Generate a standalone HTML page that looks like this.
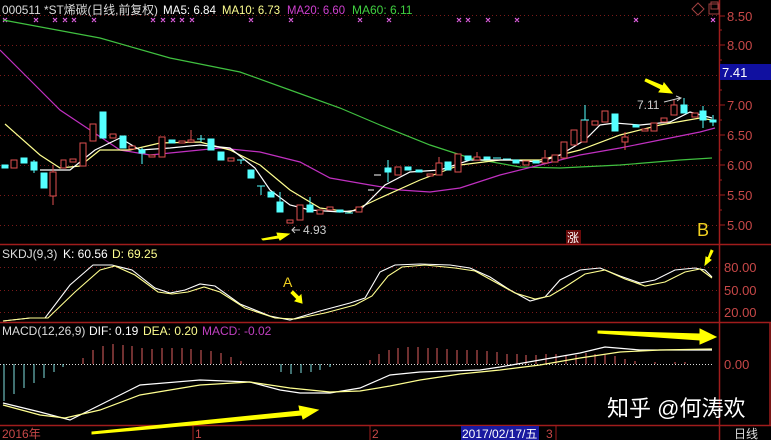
<!DOCTYPE html>
<html><head><meta charset="utf-8"><style>
html,body{margin:0;padding:0;background:#000;}
body{width:771px;height:440px;overflow:hidden;position:relative;font-family:"Liberation Sans","Noto Sans CJK SC",sans-serif;}
svg{position:absolute;left:0;top:0;}
text{font-family:"Liberation Sans","Noto Sans CJK SC",sans-serif;}
</style></head><body>
<svg width="771" height="440" viewBox="0 0 771 440">
<g stroke="#7a1a1a" stroke-dasharray="1,3" stroke-width="1">
<line x1="0" y1="15.5" x2="718" y2="15.5"/><line x1="0" y1="45.5" x2="718" y2="45.5"/>
<line x1="0" y1="75.5" x2="718" y2="75.5"/><line x1="0" y1="105.5" x2="718" y2="105.5"/>
<line x1="0" y1="135.5" x2="718" y2="135.5"/><line x1="0" y1="165.5" x2="718" y2="165.5"/>
<line x1="0" y1="195.5" x2="718" y2="195.5"/><line x1="0" y1="225.5" x2="718" y2="225.5"/>
<line x1="0" y1="267.5" x2="718" y2="267.5"/><line x1="0" y1="290.5" x2="718" y2="290.5"/>
<line x1="0" y1="312.5" x2="718" y2="312.5"/>
</g>
<line x1="0" y1="364.5" x2="712" y2="364.5" stroke="#ddd" stroke-dasharray="1,2"/>
<g stroke="#a01c1c" stroke-width="1.5" fill="none">
<line x1="0" y1="244.5" x2="771" y2="244.5"/>
<line x1="0" y1="322.5" x2="771" y2="322.5"/>
<line x1="0" y1="425.5" x2="771" y2="425.5"/>
<line x1="719.5" y1="0" x2="719.5" y2="440"/>
<line x1="770" y1="322" x2="770" y2="425"/>
</g>
<g stroke="#a01c1c">
<line x1="719" y1="16" x2="725" y2="16"/><line x1="719" y1="30" x2="722" y2="30"/><line x1="719" y1="45" x2="725" y2="45"/><line x1="719" y1="60" x2="722" y2="60"/><line x1="719" y1="90" x2="722" y2="90"/><line x1="719" y1="105" x2="725" y2="105"/><line x1="719" y1="120" x2="722" y2="120"/><line x1="719" y1="135" x2="725" y2="135"/><line x1="719" y1="150" x2="722" y2="150"/><line x1="719" y1="165" x2="725" y2="165"/><line x1="719" y1="180" x2="722" y2="180"/><line x1="719" y1="195" x2="725" y2="195"/><line x1="719" y1="210" x2="722" y2="210"/><line x1="719" y1="225" x2="725" y2="225"/>
<line x1="193" y1="425" x2="193" y2="440"/><line x1="370" y1="425" x2="370" y2="440"/><line x1="556" y1="425" x2="556" y2="440"/>
</g>
<g fill="#c84848" font-size="13">
<text x="727" y="21">8.50</text><text x="727" y="50">8.00</text><text x="727" y="110">7.00</text><text x="727" y="140">6.50</text><text x="727" y="170">6.00</text><text x="727" y="200">5.50</text><text x="727" y="230">5.00</text>
<text x="724" y="272">80.00</text><text x="724" y="295">50.00</text><text x="724" y="317">20.00</text>
<text x="724" y="369">0.00</text>
</g>
<rect x="720" y="64" width="51" height="16" fill="#1010a0"/>
<text x="722" y="77" fill="#fff" font-size="13">7.41</text>
<text x="2" y="14" font-size="12" fill="#ddd" textLength="156" lengthAdjust="spacingAndGlyphs">000511 *ST烯碳(日线,前复权)</text>
<text x="163" y="14" font-size="12" fill="#fff" textLength="53" lengthAdjust="spacingAndGlyphs">MA5: 6.84</text>
<text x="222" y="14" font-size="12" fill="#ffff90" textLength="58" lengthAdjust="spacingAndGlyphs">MA10: 6.73</text>
<text x="287" y="14" font-size="12" fill="#d040d0" textLength="58" lengthAdjust="spacingAndGlyphs">MA20: 6.60</text>
<text x="352" y="14" font-size="12" fill="#40d040">MA60: 6.11</text>
<g fill="#c040c0" stroke="#e060e0" stroke-width="1.2">
<path d="M3 18l4 4m0-4l-4 4M34 18l4 4m0-4l-4 4M53 18l4 4m0-4l-4 4M63 18l4 4m0-4l-4 4M72 18l4 4m0-4l-4 4M92 18l4 4m0-4l-4 4M151 18l4 4m0-4l-4 4M161 18l4 4m0-4l-4 4M171 18l4 4m0-4l-4 4M180 18l4 4m0-4l-4 4M190 18l4 4m0-4l-4 4M249 18l4 4m0-4l-4 4M289 18l4 4m0-4l-4 4M358 18l4 4m0-4l-4 4M387 18l4 4m0-4l-4 4M457 18l4 4m0-4l-4 4M466 18l4 4m0-4l-4 4M486 18l4 4m0-4l-4 4M515 18l4 4m0-4l-4 4M634 18l4 4m0-4l-4 4M711 18l4 4m0-4l-4 4"/>
</g>
<path d="M698 3 L704 9 L698 15 L692 9 Z" fill="none" stroke="#a04040"/>
<rect x="709" y="4" width="10" height="10" fill="none" stroke="#a04040"/><rect x="711" y="2" width="7" height="7" fill="none" stroke="#a04040"/>
<g fill="none" stroke-width="1.2">
<polyline stroke="#40c040" points="3,20 100,38 170,58 240,72 290,90 340,108 380,125 430,145 470,158 520,167 560,168 620,165 680,160 712,158"/>
<polyline stroke="#c030c0" points="0,50 30,80 60,110 90,130 120,150 150,155 180,152 220,148 260,152 300,162 330,178 370,185 400,190 430,192 460,188 500,175 540,165 580,155 620,148 660,140 700,132 715,128"/>
<polyline stroke="#ffff90" points="5,124 40,155 60,168 80,166 100,150 130,150 160,143 200,142 230,150 260,165 290,190 320,208 350,212 380,198 420,180 460,165 500,160 540,160 580,150 620,135 660,125 700,118 712,120"/>
<polyline stroke="#fff" points="40,170 70,170 95,150 120,138 140,150 170,148 200,145 230,148 255,168 270,190 290,205 310,210 340,212 360,210 385,185 410,172 440,170 470,160 510,160 540,162 560,155 585,140 600,125 615,123 640,125 670,122 690,112 712,118"/>
</g>
<g stroke="#e05050" fill="#000">
<rect x="11" y="160" width="6" height="8"/><rect x="61" y="160" width="5" height="8"/><rect x="70" y="159" width="6" height="3"/>
<line x1="53" y1="165" x2="53" y2="205"/><rect x="50" y="172" width="6" height="24"/>
<rect x="80" y="143" width="6" height="23"/><rect x="90" y="124" width="6" height="17"/><rect x="110" y="134" width="6" height="4"/>
<rect x="129" y="146" width="6" height="3"/><rect x="149" y="155" width="6" height="2"/><rect x="159" y="137" width="6" height="20"/>
<line x1="191" y1="130" x2="191" y2="142"/><rect x="179" y="141" width="6" height="2"/><rect x="188" y="140" width="6" height="2"/>
<rect x="228" y="158" width="6" height="3"/><rect x="287" y="220" width="6" height="3"/><rect x="297" y="205" width="6" height="15"/>
<rect x="317" y="210" width="6" height="4"/><rect x="327" y="207" width="6" height="3"/><rect x="356" y="207" width="6" height="5"/>
<rect x="395" y="167" width="6" height="8"/><rect x="427" y="174" width="6" height="2"/><line x1="439" y1="157" x2="439" y2="163"/><rect x="436" y="163" width="6" height="12"/>
<rect x="455" y="154" width="6" height="18"/><line x1="477" y1="152" x2="477" y2="157"/><rect x="474" y="157" width="6" height="3"/>
<rect x="523" y="161" width="6" height="4"/><line x1="545" y1="150" x2="545" y2="158"/><rect x="542" y="158" width="6" height="5"/><rect x="552" y="155" width="6" height="7"/>
<rect x="561" y="142" width="6" height="16"/><rect x="571" y="130" width="6" height="15"/><rect x="581" y="120" width="6" height="22"/>
<rect x="592" y="121" width="6" height="4"/><rect x="602" y="111" width="6" height="11"/><line x1="625" y1="132" x2="625" y2="150"/><rect x="622" y="137" width="6" height="5"/>
<rect x="642" y="129" width="6" height="2"/><rect x="651" y="123" width="6" height="8"/><rect x="661" y="118" width="6" height="4"/>
<line x1="674" y1="100" x2="674" y2="105"/><rect x="671" y="105" width="6" height="10"/><rect x="692" y="113" width="6" height="4"/>
</g>
<g stroke="#54ffff" fill="#54ffff">
<rect x="2" y="165" width="6" height="3"/><rect x="21" y="158" width="6" height="5"/><line x1="34" y1="160" x2="34" y2="173"/><rect x="31" y="162" width="6" height="8"/>
<rect x="41" y="173" width="6" height="15"/><rect x="100" y="112" width="6" height="26"/><rect x="120" y="136" width="6" height="12"/>
<line x1="142" y1="148" x2="142" y2="164"/><rect x="139" y="150" width="6" height="3"/><rect x="169" y="140" width="6" height="3"/>
<line x1="201" y1="135" x2="201" y2="142"/><line x1="197" y1="139" x2="205" y2="139"/><rect x="208" y="139" width="6" height="11"/><rect x="218" y="152" width="6" height="8"/>
<line x1="237" y1="160" x2="245" y2="160"/><line x1="241" y1="160" x2="241" y2="164"/><rect x="248" y="170" width="6" height="8"/><line x1="257" y1="186" x2="265" y2="186"/><line x1="261" y1="186" x2="261" y2="195"/>
<rect x="268" y="192" width="6" height="5"/><line x1="280" y1="192" x2="280" y2="212"/><rect x="277" y="202" width="6" height="10"/><line x1="310" y1="197" x2="310" y2="212"/><rect x="307" y="205" width="6" height="7"/>
<rect x="337" y="210" width="6" height="2"/><line x1="345" y1="213" x2="353" y2="213"/>
<line x1="388" y1="160" x2="388" y2="182"/><rect x="385" y="168" width="6" height="4"/><rect x="405" y="167" width="6" height="3"/><rect x="416" y="170" width="6" height="2"/>
<rect x="445" y="162" width="6" height="8"/><rect x="465" y="156" width="6" height="4"/><rect x="484" y="157" width="6" height="2"/>
<line x1="493" y1="158" x2="501" y2="158"/><line x1="503" y1="159" x2="511" y2="159"/><rect x="513" y="160" width="6" height="3"/><rect x="533" y="161" width="6" height="2"/>
<line x1="585" y1="105" x2="585" y2="120"/><line x1="581" y1="120" x2="589" y2="120"/>
<rect x="612" y="114" width="6" height="17"/><rect x="633" y="125" width="6" height="2"/><line x1="684" y1="98" x2="684" y2="113"/><rect x="681" y="105" width="6" height="8"/>
<line x1="703" y1="106" x2="703" y2="128"/><rect x="700" y="111" width="6" height="9"/><line x1="713" y1="115" x2="713" y2="126"/><rect x="710" y="120" width="6" height="2"/>
</g>
<g stroke="#fff"><line x1="374" y1="175" x2="381" y2="175"/><line x1="368" y1="190" x2="374" y2="190"/></g>
<text x="303" y="234" font-size="12" fill="#ccc">4.93</text>
<path d="M300 230 L292 230 M295 227 L292 230 L295 233" stroke="#ccc" fill="none"/>
<text x="637" y="109" font-size="12" fill="#ccc">7.11</text>
<path d="M664 102 L680 98 M676 96 L681 98 L677 101" stroke="#ccc" fill="none"/>
<rect x="566" y="230" width="15" height="14" fill="#6a0a0a"/><text x="567" y="242" font-size="12" fill="#fff">涨</text>
<text x="697" y="236" font-size="18" fill="#f0d020">B</text>
<g fill="#ffff00" stroke="#ffff00">
<path d="M262 239 L278 236 L277 233 L289 234 L280 240 L279 238 L263 240 Z"/>
<path d="M646 79 L663 86 L664 83 L672 93 L659 92 L661 89 L645 81 Z"/>
<path d="M293 291 L299 297 L301 295 L302 303 L295 301 L297 299 L291 293 Z"/>
<path d="M711 250 L708 258 L706 257 L705 265 L711 260 L709 259 L713 251 Z"/>
<path d="M598 331 L700 334 L700 329 L716 337 L700 344 L700 340 L598 333 Z"/>
<path d="M92 432 L300 411 L299 406 L318 410 L303 419 L302 415 L92 434 Z"/>
</g>
<text x="283" y="287" font-size="14" fill="#f0d020">A</text>
<text x="2" y="258" font-size="12" fill="#ddd">SKDJ(9,3)</text>
<text x="63" y="258" font-size="12" fill="#fff">K: 60.56</text>
<text x="112" y="258" font-size="12" fill="#ffff90">D: 69.25</text>
<g fill="none" stroke-width="1.1">
<polyline stroke="#fff" points="3,321 30,318 45,318 70,285 93,265 112,265 132,270 155,288 170,293 185,290 200,284 215,286 240,304 270,316 290,320 320,311 350,303 365,298 380,272 395,265 420,264 450,265 470,268 490,277 510,290 530,301 545,297 560,280 580,270 600,268 620,276 640,283 655,280 675,270 695,268 705,270 712,277"/>
<polyline stroke="#ffff90" points="3,321 30,318 48,318 75,292 100,270 115,266 135,275 158,292 172,294 188,292 204,287 220,292 245,308 275,318 295,319 325,313 355,305 372,296 388,276 402,267 425,265 455,268 475,271 495,282 515,293 535,299 550,296 565,287 585,274 605,270 625,279 645,286 665,282 685,272 700,269 712,278"/>
</g>
<text x="2" y="335" font-size="12" fill="#ddd">MACD(12,26,9)</text>
<text x="89" y="335" font-size="12" fill="#fff">DIF: 0.19</text>
<text x="143" y="335" font-size="12" fill="#ffff90">DEA: 0.20</text>
<text x="202" y="335" font-size="12" fill="#c040c0">MACD: -0.02</text>
<g stroke="#e06060">
<line x1="83" y1="364" x2="83" y2="358"/><line x1="93" y1="364" x2="93" y2="350"/><line x1="103" y1="364" x2="103" y2="346"/><line x1="113" y1="364" x2="113" y2="344"/><line x1="123" y1="364" x2="123" y2="345"/><line x1="132" y1="364" x2="132" y2="346"/><line x1="142" y1="364" x2="142" y2="348"/><line x1="152" y1="364" x2="152" y2="349"/><line x1="162" y1="364" x2="162" y2="348"/><line x1="172" y1="364" x2="172" y2="348"/><line x1="182" y1="364" x2="182" y2="348"/><line x1="191" y1="364" x2="191" y2="349"/><line x1="201" y1="364" x2="201" y2="350"/><line x1="211" y1="364" x2="211" y2="351"/><line x1="221" y1="364" x2="221" y2="353"/><line x1="231" y1="364" x2="231" y2="357"/><line x1="241" y1="364" x2="241" y2="361"/>
<line x1="370" y1="364" x2="370" y2="360"/><line x1="379" y1="364" x2="379" y2="354"/><line x1="389" y1="364" x2="389" y2="350"/><line x1="398" y1="364" x2="398" y2="348"/><line x1="408" y1="364" x2="408" y2="347"/><line x1="418" y1="364" x2="418" y2="347"/><line x1="428" y1="364" x2="428" y2="348"/><line x1="437" y1="364" x2="437" y2="348"/><line x1="447" y1="364" x2="447" y2="349"/><line x1="457" y1="364" x2="457" y2="350"/><line x1="467" y1="364" x2="467" y2="350"/><line x1="477" y1="364" x2="477" y2="350"/><line x1="487" y1="364" x2="487" y2="351"/><line x1="497" y1="364" x2="497" y2="352"/><line x1="507" y1="364" x2="507" y2="354"/><line x1="517" y1="364" x2="517" y2="354"/><line x1="526" y1="364" x2="526" y2="355"/><line x1="536" y1="364" x2="536" y2="355"/><line x1="546" y1="364" x2="546" y2="354"/><line x1="556" y1="364" x2="556" y2="354"/><line x1="566" y1="364" x2="566" y2="355"/><line x1="576" y1="364" x2="576" y2="355"/><line x1="586" y1="364" x2="586" y2="353"/><line x1="595" y1="364" x2="595" y2="354"/><line x1="605" y1="364" x2="605" y2="355"/><line x1="615" y1="364" x2="615" y2="356"/><line x1="625" y1="364" x2="625" y2="359"/><line x1="635" y1="364" x2="635" y2="361"/><line x1="655" y1="364" x2="655" y2="362"/><line x1="675" y1="364" x2="675" y2="362"/><line x1="685" y1="364" x2="685" y2="362"/>
</g>
<g stroke="#7fdfdf">
<line x1="4" y1="364" x2="4" y2="401"/><line x1="14" y1="364" x2="14" y2="394"/><line x1="24" y1="364" x2="24" y2="388"/><line x1="34" y1="364" x2="34" y2="383"/><line x1="44" y1="364" x2="44" y2="378"/><line x1="54" y1="364" x2="54" y2="372"/><line x1="63" y1="364" x2="63" y2="367"/>
<line x1="281" y1="364" x2="281" y2="372"/><line x1="291" y1="364" x2="291" y2="374"/><line x1="301" y1="364" x2="301" y2="373"/><line x1="311" y1="364" x2="311" y2="372"/><line x1="320" y1="364" x2="320" y2="370"/><line x1="330" y1="364" x2="330" y2="367"/>
</g>
<g fill="none" stroke-width="1.2">
<polyline stroke="#fff" points="3,403 40,412 70,420 100,405 140,385 200,380 250,382 280,390 300,393 330,393 360,388 390,375 420,372 450,371 480,370 500,367 540,360 580,353 605,347 640,350 712,350"/>
<polyline stroke="#ffff90" points="3,405 40,415 65,418 100,410 140,395 200,385 250,382 290,388 330,392 360,391 390,386 420,380 460,374 500,370 540,365 580,358 620,352 660,350 712,349"/>
</g>
<text x="607" y="416" font-size="22" fill="#fff">知乎 @何涛欢</text>
<text x="2" y="438" font-size="12" fill="#c84848">2016年</text>
<text x="195" y="438" font-size="12" fill="#c84848">1</text>
<text x="372" y="438" font-size="12" fill="#c84848">2</text>
<rect x="461" y="426" width="78" height="14" fill="#1a1aa0"/>
<text x="462" y="438" font-size="12" fill="#fff">2017/02/17/五</text>
<text x="546" y="438" font-size="12" fill="#c84848">3</text>
<text x="734" y="438" font-size="12" fill="#ddd">日线</text>
</svg>
</body></html>
